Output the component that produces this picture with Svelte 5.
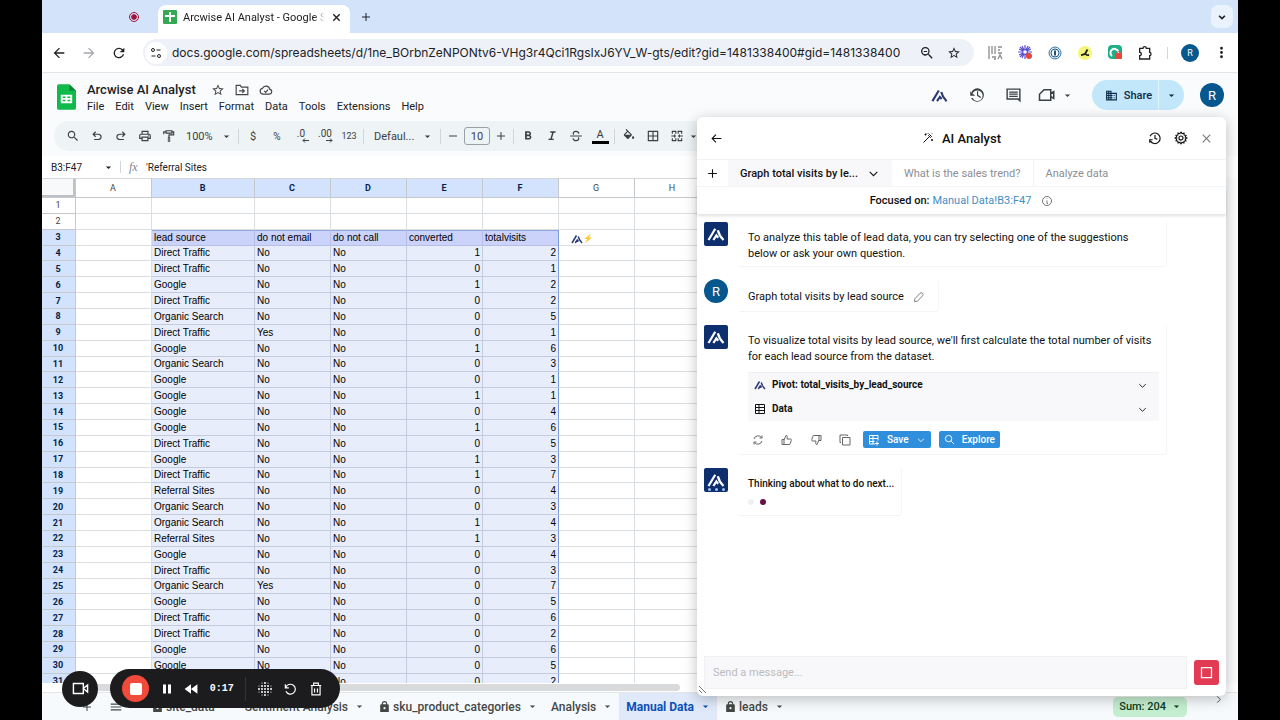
<script lang="ts">
    let message = $state("");
    let recording = $state(true);

    const menus = ["File", "Edit", "View", "Insert", "Format", "Data", "Tools", "Extensions", "Help"];
    const columns = ["A", "B", "C", "D", "E", "F", "G", "H", "I", "J", "K", "L", "M", "N"];
    const headings = ["lead source", "do not email", "do not call", "converted", "totalvisits"];

    const leads = [
        ["Direct Traffic", "No", "No", 1, 2],
        ["Direct Traffic", "No", "No", 0, 1],
        ["Google", "No", "No", 1, 2],
        ["Direct Traffic", "No", "No", 0, 2],
        ["Organic Search", "No", "No", 0, 5],
        ["Direct Traffic", "Yes", "No", 0, 1],
        ["Google", "No", "No", 1, 6],
        ["Organic Search", "No", "No", 0, 3],
        ["Google", "No", "No", 0, 1],
        ["Google", "No", "No", 1, 1],
        ["Google", "No", "No", 0, 4],
        ["Google", "No", "No", 1, 6],
        ["Direct Traffic", "No", "No", 0, 5],
        ["Google", "No", "No", 1, 3],
        ["Direct Traffic", "No", "No", 1, 7],
        ["Referral Sites", "No", "No", 0, 4],
        ["Organic Search", "No", "No", 0, 3],
        ["Organic Search", "No", "No", 1, 4],
        ["Referral Sites", "No", "No", 1, 3],
        ["Google", "No", "No", 0, 4],
        ["Direct Traffic", "No", "No", 0, 3],
        ["Organic Search", "Yes", "No", 0, 7],
        ["Google", "No", "No", 0, 5],
        ["Direct Traffic", "No", "No", 0, 6],
        ["Direct Traffic", "No", "No", 0, 2],
        ["Google", "No", "No", 0, 6],
        ["Google", "No", "No", 0, 5],
        ["Google", "No", "No", 0, 2]
    ];

    // rows 1 and 2 are blank, the selected range starts at row 3
    const rows = [[], [], headings, ...leads];

    const sheets = [
        { name: "site_data", locked: true, active: false },
        { name: "Sentiment Analysis", locked: false, active: false },
        { name: "sku_product_categories", locked: true, active: false },
        { name: "Analysis", locked: false, active: false },
        { name: "Manual Data", locked: false, active: true },
        { name: "leads", locked: true, active: false }
    ];

    // solid glyphs, 24 unit grid
    const solid: Record<string, string> = {
        search: "M15.5 14h-.8l-.3-.3a6.5 6.5 0 1 0-.7.7l.3.3v.8l5 5 1.5-1.5zm-6 0a4.5 4.5 0 1 1 0-9 4.5 4.5 0 0 1 0 9z",
        zoomOut: "M15.5 14h-.8l-.3-.3a6.5 6.5 0 1 0-.7.7l.3.3v.8l5 5 1.5-1.5zm-6 0a4.5 4.5 0 1 1 0-9 4.5 4.5 0 0 1 0 9zM7 9h5v1.5H7z",
        back: "M20 11H7.8l5.6-5.6L12 4l-8 8 8 8 1.4-1.4L7.8 13H20z",
        forward: "M4 11h12.2l-5.6-5.6L12 4l8 8-8 8-1.4-1.4 5.6-5.6H4z",
        reload: "M17.65 6.35A8 8 0 1 0 19.73 14h-2.08A6 6 0 1 1 12 6c1.66 0 3.14.69 4.22 1.78L13 11h7V4z",
        star: "M22 9.24l-7.19-.62L12 2 9.19 8.63 2 9.24l5.46 4.73L5.82 21 12 17.27 18.18 21l-1.63-7.03zM12 15.4l-3.76 2.27 1-4.28-3.32-2.88 4.38-.38L12 6.1l1.71 4.04 4.38.38-3.32 2.88 1 4.28z",
        undo: "M7 19v-2h7.1q1.57 0 2.74-1T18 13.5 16.84 11t-2.74-1H7.8l2.6 2.6L9 14 4 9l5-5 1.4 1.4L7.8 8h6.3q2.43 0 4.16 1.58T20 13.5t-1.74 3.93T14.1 19z",
        redo: "M17 19v-2H9.9q-1.57 0-2.74-1T6 13.5 7.16 11 9.9 10h6.3l-2.6 2.6L15 14l5-5-5-5-1.4 1.4L16.2 8H9.9Q7.47 8 5.74 9.58T4 13.5t1.74 3.93T9.9 19z",
        print: "M19 8h-1V3H6v5H5a3 3 0 0 0-3 3v6h4v4h12v-4h4v-6a3 3 0 0 0-3-3zM8 5h8v3H8zm8 14H8v-4h8zm2-4v-2H6v2H4v-4c0-.55.45-1 1-1h14c.55 0 1 .45 1 1v4zm1-3.5a1 1 0 1 1-2 0 1 1 0 0 1 2 0z",
        paint: "M6 2h12v2h3v7h-8v3h1v8h-4v-8h1V9h8V6h-1v2H6V6H4v3H2V4h4zM8 4v2h8V4zm3.500 11.500v5h1v-5z",
        bold: "M15.6 10.79c.97-.67 1.65-1.77 1.65-2.79 0-2.26-1.75-4-4-4H7v14h7.04c2.09 0 3.71-1.7 3.71-3.79 0-1.52-.86-2.82-2.15-3.42zM10 6.5h3a1.5 1.5 0 0 1 0 3h-3zm3.5 9H10v-3h3.5a1.5 1.5 0 0 1 0 3z",
        italic: "M9 4v2.300h3.200L9.200 16.700H6V19h9v-2.300h-3.200l3-10.400H18V4z",
        fill: "M16.56 8.94L7.62 0 6.21 1.41l2.38 2.38-5.15 5.15a1.5 1.5 0 0 0 0 2.12l5.5 5.5c.59.59 1.53.59 2.12 0l5.5-5.5c.59-.59.59-1.53 0-2.12zM5.21 10L10 5.21 14.79 10zM19 11.5s-2 2.17-2 3.5a2 2 0 0 0 4 0c0-1.33-2-3.5-2-3.5z",
        borders: "M3 3v18h18V3zm8 16H5v-6h6zm0-8H5V5h6zm8 8h-6v-6h6zm0-8h-6V5h6z",
        merge: "M3 3h8v5H9V5H5v3H3zm10 0h8v5h-2V5h-4v3h-2zM3 16h2v3h4v-3h2v5H3zm10 0h2v3h4v-3h2v5h-8zM2 11h5V8.500l3.500 3.500L7 15.500V13H2zm20 0h-5V8.500L13.500 12l3.500 3.500V13h5z",
        history: "M13 3a9 9 0 0 0-8.500 6L3 6.500V13h6.500L7 10.500l-1.200.6A7 7 0 1 1 6.200 16H4.100A9 9 0 1 0 13 3zm-1 4v6l4.500 3 1-1.500-4-2.500V7z",
        comment: "M22 2H2v16h16l4 4zM4 4h16v12H4zm2 10h12v-1.800H6zm0-3h12V9.200H6zm0-3h12V6.200H6z",
        building: "M12 7V3H2v18h20V7zM6 19H4v-2h2zm0-4H4v-2h2zm0-4H4V9h2zm0-4H4V5h2zm4 12H8v-2h2zm0-4H8v-2h2zm0-4H8V9h2zm0-4H8V5h2zm10 12h-8v-2h2v-2h-2v-2h2v-2h-2V9h8zm-2-8h-2v2h2zm0 4h-2v2h2z",
        lock: "M18 8h-1V7A5 5 0 0 0 7 7v1H6a2 2 0 0 0-2 2v12h16V10a2 2 0 0 0-2-2zm-6 9a2 2 0 1 1 0-4 2 2 0 0 1 0 4zM9 8V7a3 3 0 0 1 6 0v1z",
        caret: "M5 9l7 7 7-7z",
        menu: "M3 18h18v-2H3zm0-5h18v-2H3zm0-7v2h18V6z",
        dots: "M12 8a2 2 0 1 0 0-4 2 2 0 0 0 0 4zm0 2a2 2 0 1 0 0 4 2 2 0 0 0 0-4zm0 6a2 2 0 1 0 0 4 2 2 0 0 0 0-4z",
        pause: "M4 3h6v18H4zm10 0h6v18h-6z",
        rewind: "M12 4v16L1 12zm11 0v16l-11-8z"
    };

    // outlined glyphs, 24 unit grid
    const line: Record<string, string> = {
        plus: "M12 4v16M4 12h16",
        minus: "M4 12h16",
        close: "M5 5l14 14M19 5L5 19",
        down: "M5 9l7 7 7-7",
        right: "M9 5l7 7-7 7",
        arrow: "M21 12H4M11 5l-7 7 7 7",
        strike: "M2 12h20M17 8c-.5-3-2.500-4-5-4-4 0-6 3-4 5.500M7 16c.5 3 2.500 4 5 4 4 0 6-3 4-5.500",
        tune: "M3 6a3 3 0 1 0 6 0 3 3 0 0 0-6 0zM13 6h8M15 18a3 3 0 1 0 6 0 3 3 0 0 0-6 0zM3 18h8",
        folder: "M2 20V4h7l2 3h11v13zM7 13.500h9M12.500 10l3.500 3.500-3.500 3.500",
        cloud: "M7 19a5 5 0 0 1-1-9.900A6.500 6.500 0 0 1 18.300 10.500 4.300 4.300 0 0 1 18 19zM9 13.500l2.500 2.500 4-4.500",
        puzzle: "M4 5h5a2.500 2.500 0 0 1 5 0h5v6a2 2.500 0 0 1 0 5v5H4v-5a2.500 2.500 0 0 0 0-5z",
        camera: "M8 5h9v14H2v-8zM17 10l4-2.500v9L17 14",
        recorder: "M2 5h14v14H2zM16 12l6-5v10z",
        wand: "M3 21L15 9M13 7l4 4 2-2-4-4zM7 3v4M5 5h4M20 14v4M18 16h4M10 3l1 1M20 3l1-1M13 2v1",
        clock: "M4 17A9 9 0 1 0 3.500 9M3 20v-5h5M12 7v6l4 1",
        gear: "M12 2l2 2.600 3.100-1 .3 3.200 3.200.7-1.300 2.900L22 12l-2.700 1.800 1.100 3-3.100.6-.4 3.200-3-1.200L12 22l-2-2.600-3 1.200-.4-3.200-3.100-.6 1.200-3L2 12l2.700-1.600-1.300-2.900 3.200-.7.3-3.200 3.100 1zM8.500 12a3.500 3.500 0 1 0 7 0 3.500 3.500 0 0 0-7 0z",
        info: "M3 12a9 9 0 1 0 18 0 9 9 0 0 0-18 0zM12 11v6h2M12 7v1",
        pencil: "M4 15L15 3a3.500 3.500 0 0 1 6 5L10 20l-7 1z",
        data: "M3 3h18v18H3zM3 9h18M10 3v18M3 15h18",
        tableAdd: "M14 20H3V3h17v10M3 9h17M10 3v17M3 15h10M18 15v8M14 19h8",
        refresh: "M4 10a8.500 8.500 0 0 1 15-3M20 3v5h-5M20 14a8.500 8.500 0 0 1-15 3M4 21v-5h5",
        thumbUp: "M2 11h4v10H2zM6 12l4-9c3 0 3 2 2 7h7c2 0 2 2 1.500 3l-2 6c-.4 1.500-1 2-2.500 2H6",
        copy: "M7 7h15v15H7zM4 17H2V2h15v2",
        magnify: "M3 10a7 7 0 1 0 14 0 7 7 0 0 0-14 0zM15.500 15.500L22 22",
        stop: "M4 4h16v16H4z",
        restart: "M4 4v6h6M4.500 10A8.500 8.500 0 1 1 5 16",
        trash: "M3 6h18M8 6V2h8v4M5 6v16h14V6M9.500 11v7M14.500 11v7"
    };
</script>

{#snippet icon(name: string, size = 16)}
    <svg class="icon" width={size} height={size} viewBox="0 0 24 24" aria-hidden="true">
        {#if solid[name]}
            <path class="solid" d={solid[name]} />
        {:else}
            <path class="line" d={line[name]} />
        {/if}
    </svg>
{/snippet}

{#snippet arcwise(size: number)}
    <svg class="icon" width={size} height={size} viewBox="0 0 24 24" aria-hidden="true">
        <path class="mark" d="M2 20L11 5M14.500 7c1 4.500 4 9.500 7.500 13M8.500 20l4-6 2.500 3" />
    </svg>
{/snippet}

{#snippet botAvatar(busy = false)}
    <div class="bot">
        {@render arcwise(18)}
        {#if busy}<span class="busy"><i></i><i></i><i></i></span>{/if}
    </div>
{/snippet}

<div class="window">
    <div class="tabstrip">
        <span class="rec-mark"></span>
        <div class="tab">
            <svg class="icon" width="14" height="14" viewBox="0 0 14 14" aria-hidden="true">
                <rect width="14" height="14" rx="1" fill="#34a853" />
                <path d="M7 2v10M2 6h10" stroke="#fff" stroke-width="2" />
            </svg>
            <span class="tab-title">Arcwise AI Analyst - Google S</span>
            <button class="plain" aria-label="Close tab">{@render icon("close", 11)}</button>
        </div>
        <button class="plain new-tab" aria-label="New tab">{@render icon("plus", 12)}</button>
        <button class="plain tab-search" aria-label="Search tabs">{@render icon("down", 10)}</button>
    </div>

    <div class="address">
        <button class="plain nav" aria-label="Back">{@render icon("back", 16)}</button>
        <button class="plain nav faded" aria-label="Forward">{@render icon("forward", 16)}</button>
        <button class="plain nav" aria-label="Reload">{@render icon("reload", 16)}</button>
        <div class="omnibox">
            <button class="plain site" aria-label="Site information">{@render icon("tune", 12)}</button>
            <input
                class="url"
                aria-label="Address"
                value="docs.google.com/spreadsheets/d/1ne_BOrbnZeNPONtv6-VHg3r4Qci1RgsIxJ6YV_W-gts/edit?gid=1481338400#gid=1481338400"
            />
            <button class="plain omni-btn" aria-label="Zoom">{@render icon("zoomOut", 16)}</button>
            <button class="plain omni-btn" aria-label="Bookmark">{@render icon("star", 14)}</button>
        </div>
        <div class="extensions">
            <button class="plain ext" aria-label="Extension">
                <svg class="icon" width="15" height="15" viewBox="0 0 15 15">
                    <path d="M1 1v13M4 1v8M7 1v8M4 12h4M10 2h4M10 5h2M10 8h4M10 14l2-4 2 4M6 14h2" stroke="#8b8b8b" stroke-width="1.3" fill="none" />
                </svg>
            </button>
            <button class="plain ext" aria-label="Loom">
                <svg class="icon" width="15" height="15" viewBox="0 0 15 15">
                    <path d="M7 0v14M0 7h14M2 2l10 10M12 2L2 12M4 1l6 12M1 4l12 6M10 1L4 13M1 10l12-6" stroke="#5a4fcf" stroke-width="1.2" />
                    <circle cx="7" cy="7" r="1.8" fill="#fff" />
                    <circle cx="11" cy="11" r="3" fill="#e8453c" />
                </svg>
            </button>
            <button class="plain ext" aria-label="1Password">
                <svg class="icon" width="14" height="14" viewBox="0 0 14 14">
                    <circle cx="7" cy="7" r="6" fill="#dcebf5" stroke="#3a78a8" />
                    <circle cx="7" cy="7" r="4" fill="#fff" stroke="#1d5c8f" />
                    <path d="M7 4.500v5" stroke="#123c5e" stroke-width="1.8" />
                </svg>
            </button>
            <button class="plain ext" aria-label="Notes">
                <svg class="icon" width="14" height="14" viewBox="0 0 14 14">
                    <circle cx="7" cy="7" r="7" fill="#f3f57a" />
                    <path d="M9.500 3.500L7 8M3 9c2 0 3-1 4-1s1 1.500 4 1" stroke="#222" stroke-width="1.8" fill="none" />
                </svg>
            </button>
            <button class="plain ext" aria-label="Grammar checker">
                <svg class="icon" width="15" height="15" viewBox="0 0 15 15">
                    <rect width="14" height="14" rx="4" fill="#1fae86" />
                    <path d="M4 11a4 4 0 1 1 6-5v3" stroke="#fff" stroke-width="2" fill="none" />
                    <rect x="7" y="8" width="7" height="6" rx="1" fill="#e8453c" />
                    <path d="M9 8a1.500 1.500 0 0 1 3 0" stroke="#e8453c" fill="none" />
                </svg>
            </button>
            <button class="plain ext" aria-label="Extensions">{@render icon("puzzle", 16)}</button>
        </div>
        <span class="divider"></span>
        <button class="avatar small" aria-label="Profile">R</button>
        <button class="plain more" aria-label="Browser menu">{@render icon("dots", 17)}</button>
    </div>

    <header class="docs">
        <svg class="icon sheets-logo" width="19" height="26" viewBox="0 0 20 27" aria-hidden="true">
            <path d="M2 0h11l7 7v18a2 2 0 0 1-2 2H2a2 2 0 0 1-2-2V2a2 2 0 0 1 2-2z" fill="#11b84a" />
            <path d="M13 0l7 7h-7z" fill="#0a8a36" />
            <path d="M4 11h12v9H4zM6 13v1.500h3V13zm5 0v1.500h3V13zM6 16.500V18h3v-1.500zm5 0V18h3v-1.500z" fill="#fff" fill-rule="evenodd" />
        </svg>
        <div class="doc-info">
            <div class="doc-title">
                <h1>Arcwise AI Analyst</h1>
                <button class="plain" aria-label="Star">{@render icon("star", 14)}</button>
                <button class="plain" aria-label="Move">{@render icon("folder", 14)}</button>
                <button class="plain" aria-label="Document status">{@render icon("cloud", 14)}</button>
            </div>
            <nav class="menus">
                {#each menus as menu}
                    <button class="plain">{menu}</button>
                {/each}
            </nav>
        </div>
        <div class="doc-actions">
            <button class="plain action" aria-label="Arcwise">{@render arcwise(17)}</button>
            <button class="plain action" aria-label="Version history">{@render icon("history", 18)}</button>
            <button class="plain action" aria-label="Comments">{@render icon("comment", 17)}</button>
            <button class="plain meet" aria-label="Join a call">{@render icon("camera", 18)}{@render icon("caret", 9)}</button>
            <div class="share">
                <button class="plain share-main">{@render icon("building", 13)}Share</button>
                <button class="plain share-more" aria-label="Share options">{@render icon("caret", 9)}</button>
            </div>
            <button class="avatar" aria-label="Account">R</button>
        </div>
    </header>

    <div class="toolbar">
        {#each ["search", "undo", "redo", "print", "paint"] as tool}
            <button class="plain tool" aria-label={tool}>{@render icon(tool, 14)}</button>
        {/each}
        <div class="picker zoom">
            <select aria-label="Zoom"><option>100%</option></select>
            {@render icon("caret", 9)}
        </div>
        <span class="sep"></span>
        <button class="plain tool">$</button>
        <button class="plain tool percent">%</button>
        <button class="plain tool decimals" aria-label="Fewer decimal places"><span>.0</span>
            <svg class="icon" width="7" height="5" viewBox="0 0 7 5"><path class="line" d="M7 2.500H1M3 .5l-2 2 2 2" /></svg>
        </button>
        <button class="plain tool decimals" aria-label="More decimal places"><span>.00</span>
            <svg class="icon" width="7" height="5" viewBox="0 0 7 5"><path class="line" d="M0 2.500h6M4 .5l2 2-2 2" /></svg>
        </button>
        <button class="plain tool digits">123</button>
        <span class="sep"></span>
        <div class="picker font">
            <select aria-label="Font"><option>Defaul...</option></select>
            {@render icon("caret", 9)}
        </div>
        <span class="sep"></span>
        <button class="plain step" aria-label="Smaller">{@render icon("minus", 12)}</button>
        <input class="size" aria-label="Font size" value="10" />
        <button class="plain step" aria-label="Larger">{@render icon("plus", 12)}</button>
        <span class="sep"></span>
        {#each ["bold", "italic", "strike"] as tool}
            <button class="plain tool" aria-label={tool}>{@render icon(tool, 14)}</button>
        {/each}
        <button class="plain tool" aria-label="Text colour"><span class="text-colour">A</span></button>
        <span class="sep"></span>
        {#each ["fill", "borders", "merge"] as tool}
            <button class="plain tool" aria-label={tool}>{@render icon(tool, 14)}</button>
        {/each}
        {@render icon("caret", 9)}
    </div>

    <div class="formula">
        <input class="name-box" aria-label="Name box" value="B3:F47" />
        {@render icon("caret", 9)}
        <span class="divider"></span>
        <em>fx</em>
        <input class="formula-input" aria-label="Formula" value="'Referral Sites" />
    </div>

    <div class="grid">
        <table>
            <colgroup>
                <col class="c-num" />
                {#each columns as c}
                    <col class={c === "B" ? "c-wide" : "c-std"} />
                {/each}
            </colgroup>
            <thead>
                <tr>
                    <th class="corner" aria-label="Select all"></th>
                    {#each columns as c, i}
                        <th class:picked={i >= 1 && i <= 5}>{c}</th>
                    {/each}
                </tr>
            </thead>
            <tbody>
                {#each rows as row, r}
                    <tr class:heading={r === 2}>
                        <th class:picked={r >= 2}>{r + 1}</th>
                        {#each columns as c, i}
                            <td
                                class:selected={r >= 2 && i >= 1 && i <= 5}
                                class:number={r > 2 && i >= 4}
                                class:edge={r >= 2 && i === 5}
                            >
                                {#if r === 2 && i === 6}
                                    <span class="spark">{@render arcwise(12)}<b>⚡</b></span>
                                {:else}
                                    {row[i - 1] ?? ""}
                                {/if}
                            </td>
                        {/each}
                    </tr>
                {/each}
            </tbody>
        </table>
    </div>
    <div class="scroll-track"><span></span></div>

    <footer class="sheets">
        <button class="plain sheet-btn" aria-label="Add sheet">{@render icon("plus", 12)}</button>
        <button class="plain sheet-btn" aria-label="All sheets">{@render icon("menu", 14)}</button>
        <div class="sheet-list">
            {#each sheets as sheet}
                <button class="plain sheet" class:active={sheet.active}>
                    {#if sheet.locked}{@render icon("lock", 13)}{/if}
                    <span>{sheet.name}</span>
                    {@render icon("caret", 9)}
                </button>
            {/each}
        </div>
        <button class="plain sum">Sum: 204 {@render icon("caret", 9)}</button>
        <button class="plain side-toggle" aria-label="Show side panel">{@render icon("right", 11)}</button>
    </footer>

    <aside class="panel">
        <div class="panel-head">
            <button class="plain" aria-label="Back">{@render icon("arrow", 13)}</button>
            <h2>{@render icon("wand", 12)}AI Analyst</h2>
            <div class="panel-tools">
                <button class="plain" aria-label="History">{@render icon("clock", 14)}</button>
                <button class="plain" aria-label="Settings">{@render icon("gear", 14)}</button>
                <button class="plain dim" aria-label="Close">{@render icon("close", 13)}</button>
            </div>
        </div>
        <div class="chats">
            <button class="plain new-chat" aria-label="New chat">{@render icon("plus", 13)}</button>
            <button class="plain chat current">Graph total visits by le... {@render icon("down", 13)}</button>
            <button class="plain chat">What is the sales trend?</button>
            <button class="plain chat">Analyze data</button>
        </div>
        <div class="focus">
            <span>Focused on:</span>
            <a href="#range">Manual Data!B3:F47</a>
            {@render icon("info", 12)}
        </div>

        <div class="messages">
            <div class="message">
                {@render botAvatar()}
                <div class="bubble full">
                    <p>To analyze this table of lead data, you can try selecting one of the suggestions below or ask your own question.</p>
                </div>
            </div>
            <div class="message">
                <div class="avatar">R</div>
                <div class="bubble own">
                    <p>Graph total visits by lead source</p>
                    <button class="plain" aria-label="Edit message">{@render icon("pencil", 11)}</button>
                </div>
            </div>
            <div class="message">
                {@render botAvatar()}
                <div class="bubble full">
                    <p>To visualize total visits by lead source, we'll first calculate the total number of visits for each lead source from the dataset.</p>
                    <div class="steps">
                        <button class="plain step-row">{@render arcwise(12)}<span>Pivot: total_visits_by_lead_source</span>{@render icon("down", 11)}</button>
                        <button class="plain step-row">{@render icon("data", 12)}<span>Data</span>{@render icon("down", 11)}</button>
                    </div>
                    <div class="reply-actions">
                        <button class="plain" aria-label="Retry">{@render icon("refresh", 12)}</button>
                        <button class="plain" aria-label="Good answer">{@render icon("thumbUp", 12)}</button>
                        <button class="plain flip" aria-label="Bad answer">{@render icon("thumbUp", 12)}</button>
                        <button class="plain" aria-label="Copy">{@render icon("copy", 12)}</button>
                        <button class="blue">{@render icon("tableAdd", 12)}Save{@render icon("down", 10)}</button>
                        <button class="blue">{@render icon("magnify", 11)}Explore</button>
                    </div>
                </div>
            </div>
            <div class="message">
                {@render botAvatar(true)}
                <div class="bubble thinking">
                    <p>Thinking about what to do next...</p>
                    <span class="loader"><i></i><i></i></span>
                </div>
            </div>
        </div>

        <form class="composer" onsubmit={(e) => e.preventDefault()}>
            <input placeholder="Send a message..." aria-label="Message" bind:value={message} />
            <button type="submit" aria-label="Stop">{@render icon("stop", 15)}</button>
        </form>
        <svg class="grip" width="7" height="7" viewBox="0 0 7 7" aria-hidden="true">
            <path d="M0 0l7 7M0 4l3 3" stroke="#777" />
        </svg>
    </aside>

    <div class="recorder">
        <button class="cam" aria-label="Camera">{@render icon("recorder", 17)}</button>
        <div class="controls">
            <button class="plain record" aria-label="Stop recording" onclick={() => (recording = !recording)}><span></span></button>
            <button class="plain" aria-label="Pause">{@render icon("pause", 12)}</button>
            <button class="plain" aria-label="Rewind">{@render icon("rewind", 14)}</button>
            <time>0:17</time>
            <span class="bar"></span>
            <button class="plain" aria-label="Effects">
                <svg class="icon" width="14" height="14" viewBox="0 0 14 14">
                    <g fill="currentColor">
                        {#each [1, 4, 7, 10, 13] as y}
                            {#each [1, 4, 7, 10, 13] as x}
                                {#if Math.abs(x - 7) + Math.abs(y - 7) < 12}
                                    <circle cx={x} cy={y} r={Math.abs(x - 7) + Math.abs(y - 7) > 6 ? 0.6 : 1} />
                                {/if}
                            {/each}
                        {/each}
                    </g>
                </svg>
            </button>
            <button class="plain" aria-label="Restart">{@render icon("restart", 14)}</button>
            <button class="plain" aria-label="Delete">{@render icon("trash", 14)}</button>
        </div>
    </div>
</div>

<style>
    :global(body) {
        background: #000;
    }

    .window {
        position: relative;
        display: flex;
        flex-direction: column;
        height: 100vh;
        margin: 0 42px;
        overflow: hidden;
        background: #f9fbfc;
        color: #202124;
        font-family: Roboto, "Liberation Sans", sans-serif;
        font-size: 11px;
    }

    h1, h2, p {
        margin: 0;
    }

    button, input, select {
        font: inherit;
        color: inherit;
    }

    input, select {
        min-width: 0;
        padding: 0;
        border: none;
        background: none;
        outline: none;
        appearance: none;
    }

    .plain {
        display: flex;
        align-items: center;
        justify-content: center;
        padding: 0;
        border: none;
        background: none;
        cursor: pointer;
        white-space: nowrap;
    }

    .icon {
        flex: none;
        display: block;
    }

    .solid {
        fill: currentColor;
        fill-rule: evenodd;
    }

    .line {
        fill: none;
        stroke: currentColor;
        stroke-width: 2;
    }

    .decimals .line {
        stroke-width: 1;
    }

    .mark {
        fill: none;
        stroke: #2b3a75;
        stroke-width: 3;
    }

    .avatar {
        flex: none;
        display: flex;
        align-items: center;
        justify-content: center;
        width: 24px;
        height: 24px;
        padding: 0;
        border: none;
        border-radius: 50%;
        background: #07578f;
        color: #fff;
        font-size: 13px;
    }

    .avatar.small {
        width: 18px;
        height: 18px;
        font-size: 9px;
    }

    /* browser chrome */
    .tabstrip {
        flex: none;
        display: flex;
        align-items: center;
        height: 33px;
        padding: 0 5px 0 88px;
        background: #d3e3fa;
    }

    .rec-mark {
        width: 6px;
        height: 6px;
        margin-right: 20px;
        border: 1px solid #d3e3fa;
        border-radius: 50%;
        background: #a3123a;
        background-clip: padding-box;
        outline: 1px solid #a3123a;
    }

    .tab {
        display: flex;
        align-items: center;
        align-self: flex-end;
        gap: 6px;
        width: 192px;
        height: 28px;
        padding: 0 8px 4px 5px;
        margin-right: 10px;
        box-sizing: border-box;
        border-radius: 8px 8px 0 0;
        background: #fff;
    }

    .tab-title {
        flex: 1;
        overflow: hidden;
        white-space: nowrap;
        mask-image: linear-gradient(90deg, #000 92%, transparent);
    }

    .tab .line {
        stroke-width: 3;
    }

    .new-tab .line {
        stroke-width: 2;
    }

    .tab-search .line {
        stroke-width: 4;
    }

    .tab-search {
        width: 22px;
        height: 23px;
        margin-left: auto;
        border-radius: 7px;
        background: #eaf2fd;
    }

    .address {
        flex: none;
        display: flex;
        align-items: center;
        height: 39px;
        padding: 0 6px 0 2px;
        border-bottom: 1px solid #e0e6ea;
        background: #fff;
    }

    .nav {
        width: 30px;
    }

    .faded {
        color: #a4a7ab;
    }

    .omnibox {
        flex: 1;
        display: flex;
        align-items: center;
        height: 27px;
        margin: 0 6px 0 9px;
        padding: 0 7px 0 2px;
        border-radius: 14px;
        background: #eef2f8;
    }

    .site {
        width: 22px;
        height: 22px;
        border-radius: 50%;
        background: #fff;
    }

    .url {
        flex: 1;
        margin-left: 5px;
        font-family: Inter, sans-serif;
        font-size: 12px;
    }

    .omni-btn {
        width: 27px;
    }

    .extensions {
        display: flex;
    }

    .ext {
        width: 30px;
    }

    .divider {
        width: 1px;
        height: 12px;
        background: #d0d7de;
    }

    .address .divider {
        margin: 0 13px 0 7px;
    }

    .more {
        width: 22px;
        margin-left: 11px;
    }

    /* document header */
    .docs {
        flex: none;
        display: flex;
        align-items: center;
        height: 44px;
        padding: 0 14px 0 15px;
    }

    .sheets-logo {
        margin-top: 4px;
    }

    .doc-info {
        margin: 4px 0 0 11px;
    }

    .doc-title {
        display: flex;
        align-items: center;
        gap: 10px;
        height: 18px;
        color: #444746;
    }

    h1 {
        margin-right: 5px;
        color: #1f1f1f;
        font-size: 13px;
        font-weight: 500;
    }

    .menus {
        display: flex;
        gap: 11px;
        height: 15px;
    }

    .doc-actions {
        display: flex;
        align-items: center;
        margin-left: auto;
        color: #3c4043;
    }

    .action {
        width: 37px;
    }

    .meet {
        gap: 7px;
        width: 46px;
        margin-right: 14px;
    }

    .share {
        display: flex;
        height: 30px;
        margin-right: 16px;
        border-radius: 15px;
        background: #c2e7fb;
        color: #0b2a4a;
        overflow: hidden;
    }

    .share-main {
        gap: 6px;
        width: 67px;
        padding-left: 7px;
        box-sizing: border-box;
        border-right: 1px solid #e3f3fd;
        font-weight: 500;
    }

    .share-more {
        width: 25px;
    }

    .toolbar {
        flex: none;
        display: flex;
        align-items: center;
        height: 30px;
        margin: 4px 12px 0 12px;
        padding-left: 7px;
        border-radius: 15px;
        background: #eef3f6;
        color: #3c4043;
    }

    .tool {
        width: 24px;
        height: 22px;
    }

    .picker {
        display: flex;
        align-items: center;
        justify-content: space-between;
    }

    .picker select {
        flex: 1;
    }

    .zoom {
        width: 45px;
        padding: 0 5px;
    }

    .font {
        width: 58px;
        padding: 0 6px 0 8px;
    }

    .sep {
        width: 1px;
        height: 15px;
        margin: 0 2px;
        background: #cfd6da;
    }

    .decimals {
        flex-direction: column;
        font-size: 10px;
        line-height: 9px;
    }

    .decimals .icon {
        align-self: flex-end;
        margin-right: 4px;
    }

    .percent {
        font-size: 10px;
    }

    .digits {
        font-size: 9px;
    }

    .step {
        width: 20px;
    }

    .size {
        width: 26px;
        height: 18px;
        margin: 0 1px;
        box-sizing: border-box;
        border: 1px solid #9aa0a6;
        border-radius: 3px;
        text-align: center;
    }

    .text-colour {
        width: 17px;
        border-bottom: 3px solid #000;
        line-height: 13px;
    }

    .formula {
        flex: none;
        display: flex;
        align-items: center;
        height: 22px;
        margin-top: 5px;
        padding-left: 9px;
        background: #fff;
        font-size: 10px;
        color: #202124;
    }

    .name-box {
        width: 53px;
    }

    .formula .divider {
        margin: 0 8px 0 7px;
    }

    .formula em {
        width: 12px;
        color: #80868b;
        font-family: "Liberation Serif", serif;
        font-size: 12px;
    }

    .formula-input {
        flex: 1;
        margin-left: 5px;
    }

    /* cells */
    .grid {
        flex: 1;
        min-height: 0;
        margin-right: 12px;
        overflow: hidden;
        background: #fff;
    }

    table {
        width: 1125px;
        height: 512px;
        table-layout: fixed;
        border-spacing: 0;
        font-family: "Liberation Sans", Arial, sans-serif;
        font-size: 10px;
        line-height: 14px;
        color: #000;
    }

    .c-num { width: 34px; }
    .c-std { width: 76px; }
    .c-wide { width: 103px; }

    th, td {
        padding: 0 3px 0 2px;
        border: solid #dcdfe2;
        border-width: 0 1px 1px 0;
        overflow: hidden;
        white-space: nowrap;
    }

    td {
        vertical-align: bottom;
    }

    th {
        border-color: #c6c9cc;
        background: #fff;
        color: #444746;
        font-family: Roboto, sans-serif;
        font-size: 9px;
        font-weight: 400;
    }

    thead th {
        height: 18px;
        border-top: 1px solid #d5d8db;
    }

    th.corner {
        background: #f8f9fa;
        box-shadow: inset -2px -2px #bfc2c5;
    }

    th.picked {
        background: #d3e3fd;
        color: #041e49;
        font-weight: 700;
    }

    td.selected {
        border-color: #c3cbdd;
        background: #e7edfb;
    }

    .heading td.selected {
        border-color: #b7bfe8;
        background: #ccd3fa;
        box-shadow: inset 0 1px #8fa6dd;
    }

    td.number {
        padding: 0 2px 0 0;
        text-align: right;
    }

    td.edge, .heading td.edge {
        border-right-color: #7b9be0;
    }

    .spark {
        display: flex;
        align-items: center;
        padding-left: 10px;
        line-height: 12px;
    }

    .spark b {
        color: #f3c94b;
        font-size: 8px;
    }

    .scroll-track {
        flex: none;
        height: 9px;
        padding-left: 33px;
        background: #fff;
    }

    .scroll-track span {
        display: block;
        width: 605px;
        height: 7px;
        margin-top: 1px;
        border-radius: 0 4px 4px 0;
        background: #d8dadc;
    }

    .sheets {
        flex: none;
        display: flex;
        align-items: stretch;
        height: 28px;
        padding: 0 14px 0 30px;
        border-top: 1px solid #e3e7ea;
        box-sizing: border-box;
        background: #f7fafc;
        color: #444746;
        font-size: 12px;
        font-weight: 500;
    }

    .sheet-btn {
        width: 29px;
    }

    .sheet-list {
        display: flex;
        margin-left: 14px;
    }

    .sheet {
        gap: 2px;
        padding: 0 7px;
    }

    .sheet .icon:last-child {
        margin-left: 5px;
    }

    .sheet.active {
        background: #dfe9f9;
        color: #0b4fb5;
        font-weight: 700;
    }

    .sum {
        align-self: center;
        gap: 6px;
        height: 20px;
        margin-left: auto;
        padding: 0 6px;
        border-radius: 5px;
        background: #c4eed0;
        color: #0d3b20;
        font-size: 11px;
    }

    .side-toggle {
        margin: 0 0 14px 26px;
    }

    /* assistant panel, floats over the grid */
    .panel {
        position: absolute;
        top: 117px;
        right: 12px;
        bottom: 24px;
        display: flex;
        flex-direction: column;
        width: 529px;
        border-radius: 6px;
        background: #fff;
        box-shadow: 0 3px 14px rgba(0, 0, 0, 0.25);
        color: #111;
        font-size: 11px;
    }

    .panel-head {
        display: grid;
        grid-template-columns: 1fr auto 1fr;
        align-items: center;
        height: 43px;
        padding: 0 13px;
        box-sizing: border-box;
        border-bottom: 1px solid #f1f2f4;
    }

    .panel-head > button {
        justify-self: start;
    }

    h2 {
        display: flex;
        align-items: center;
        gap: 8px;
        font-size: 13px;
        font-weight: 500;
    }

    .panel-tools {
        display: flex;
        justify-content: flex-end;
        gap: 12px;
    }

    .dim {
        color: #777;
    }

    .chats {
        display: flex;
        height: 27px;
        padding-left: 3px;
        border-bottom: 1px solid #f4f5f7;
        box-sizing: border-box;
    }

    .new-chat {
        width: 25px;
    }

    .chat {
        padding: 0 12px;
        color: #8b8e93;
    }

    .chat + .chat + .chat {
        border-left: 1px solid #f1f2f4;
    }

    .chat.current {
        gap: 9px;
        margin-left: 3px;
        background: #f8f8fa;
        color: #111;
        font-weight: 500;
    }

    .focus {
        display: flex;
        align-items: center;
        justify-content: center;
        gap: 3px;
        height: 27px;
        box-shadow: 0 2px 3px rgba(0, 0, 0, 0.12);
        font-weight: 500;
    }

    .focus a {
        color: #3f8fc4;
        font-weight: 400;
        text-decoration: none;
    }

    .focus .icon {
        margin-left: 7px;
        color: #777;
    }

    .messages {
        flex: 1;
        min-height: 0;
        display: flex;
        flex-direction: column;
        gap: 12px;
        padding: 7px 59px 0 7px;
    }

    .message {
        display: flex;
        align-items: flex-start;
        gap: 9px;
    }

    .bot {
        flex: none;
        position: relative;
        display: flex;
        align-items: center;
        justify-content: center;
        width: 24px;
        height: 24px;
        margin-top: 1px;
        border-radius: 2px;
        background: #0d2f6e;
    }

    .bot .mark {
        stroke: #fff;
    }

    .busy {
        position: absolute;
        bottom: 1px;
        display: flex;
        gap: 4px;
    }

    .busy i {
        width: 3px;
        height: 3px;
        border-radius: 50%;
        background: #9cc4f5;
    }

    .bubble {
        padding: 9px 7px 4px 11px;
        box-sizing: border-box;
        border-right: 1px solid #f7f7f8;
        border-bottom: 1px solid #f4f4f5;
        border-radius: 3px;
        line-height: 16px;
    }

    .full {
        flex: 1;
    }

    .full p {
        padding-right: 4px;
    }

    .own {
        display: flex;
        gap: 9px;
        padding: 10px 14px 6px 11px;
        color: #111;
    }

    .own button {
        color: #777;
    }

    .steps {
        margin-top: 7px;
        background: #f8f8fa;
        border-top: 1px solid #eff0f2;
    }

    .step-row {
        gap: 6px;
        width: 100%;
        height: 24px;
        padding: 0 11px 0 6px;
        font-size: 10px;
        font-weight: 700;
    }

    .step-row span {
        flex: 1;
        text-align: left;
    }

    .reply-actions {
        display: flex;
        align-items: center;
        margin-top: 10px;
        padding: 0 0 2px 4px;
        color: #666;
    }

    .reply-actions .plain {
        margin-right: 17px;
    }

    .flip .icon {
        transform: rotate(180deg);
    }

    .reply-actions .plain:nth-child(4) {
        margin-right: 12px;
    }

    .blue {
        display: flex;
        align-items: center;
        gap: 7px;
        height: 17px;
        margin-right: 8px;
        padding: 0 5px;
        border: none;
        border-radius: 2px;
        background: #2f8fdc;
        color: #fff;
        font-size: 10px;
        font-weight: 500;
    }

    .thinking {
        font-size: 10px;
        font-weight: 500;
    }

    .loader {
        display: flex;
        gap: 6px;
        margin: 7px 0 6px 0;
    }

    .loader i {
        width: 6px;
        height: 6px;
        border-radius: 50%;
        background: #f0f0f4;
    }

    .loader i:last-child {
        background: #6b0f49;
    }

    .composer {
        display: flex;
        align-items: center;
        gap: 7px;
        padding: 0 7px 7px 7px;
    }

    .composer input {
        flex: 1;
        height: 33px;
        padding: 0 8px;
        box-sizing: border-box;
        border: 1px solid #f0f1f3;
        background: #f8f8fa;
    }

    .composer input::placeholder {
        color: #b9bbc0;
        opacity: 1;
    }

    .composer button {
        display: flex;
        align-items: center;
        justify-content: center;
        width: 25px;
        height: 25px;
        padding: 0;
        border: none;
        border-radius: 3px;
        background: #e23c55;
        color: #fff;
    }

    .grip {
        position: absolute;
        left: 2px;
        bottom: 3px;
    }

    /* screen recorder overlay */
    .recorder {
        position: absolute;
        left: 20px;
        bottom: 12px;
        display: flex;
        align-items: center;
        gap: 12px;
        color: #fff;
    }

    .cam {
        display: flex;
        align-items: center;
        justify-content: center;
        width: 36px;
        height: 36px;
        padding: 0;
        border: none;
        border-radius: 50%;
        background: #1c1c1e;
    }

    .controls {
        display: flex;
        align-items: center;
        justify-content: space-between;
        width: 230px;
        height: 39px;
        padding: 0 17px 0 12px;
        box-sizing: border-box;
        border-radius: 20px;
        background: #1c1c1e;
    }

    .record {
        width: 27px;
        height: 27px;
        border-radius: 50%;
        background: #f04b3a;
    }

    .record span {
        width: 12px;
        height: 12px;
        border-radius: 2px;
        background: #fff;
    }

    time {
        font-family: "Liberation Mono", monospace;
        font-weight: 700;
        font-size: 10px;
    }

    .bar {
        width: 1px;
        height: 24px;
        background: #333;
    }
</style>
